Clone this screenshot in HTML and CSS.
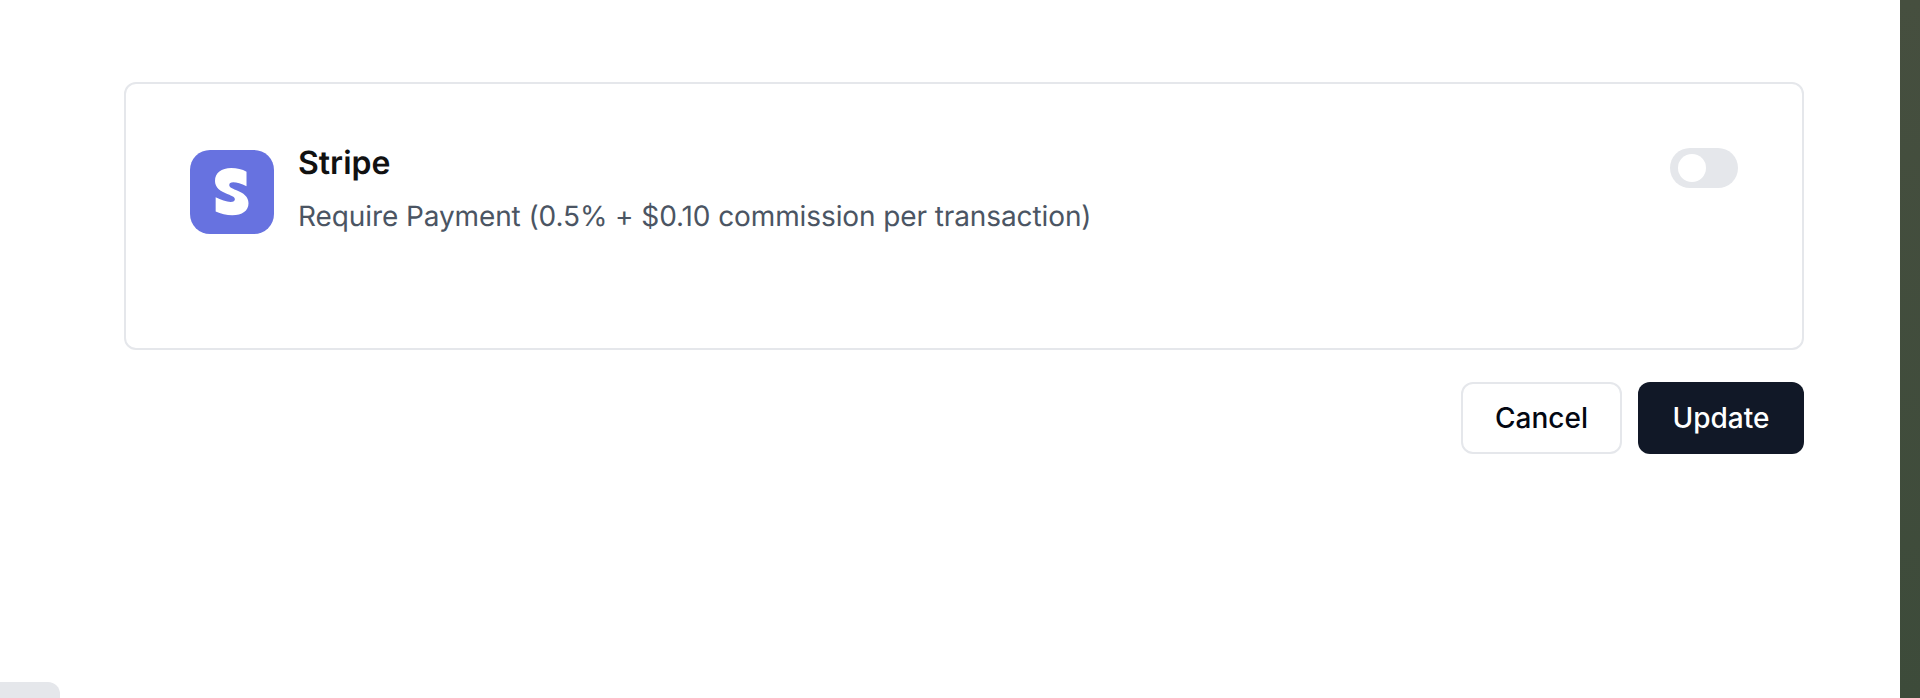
FILE: index.html
```html
<!DOCTYPE html>
<html lang="en">
<head>
<meta charset="utf-8">
<title>Stripe</title>
<link rel="stylesheet" href="styles.css">
</head>
<body>
<div class="shell">
  <main class="panel">
    <section class="card">
      <div class="logo">
        <svg class="logo-s" viewBox="345 325 101 142" aria-hidden="true"><path d="M440 336L440 380C425 372 410 368 400 368C392 368 388 371 388 376C388 383 396 386 408 391C432 400 446 412 446 431C446 454 427 467 397 467C380 467 362 463 347 456L347 413C362 421 380 427 392 427C401 427 405 424 405 419C405 412 396 409 384 404C360 395 345 383 345 364C345 340 364 325 394 325C411 325 427 329 440 336Z"/></svg>
      </div>
      <div class="info">
        <h2 class="name">Stripe</h2>
        <p class="desc">Require Payment (0.5% + $0.10 commission per transaction)</p>
      </div>
      <div class="toggle"><span class="knob"></span></div>
    </section>
    <div class="actions">
      <button class="btn btn-outline">Cancel</button>
      <button class="btn btn-dark">Update</button>
    </div>
    <div class="corner"></div>
  </main>
  <div class="band"></div>
</div>
</body>
</html>
```
FILE: styles.css
```css
* { box-sizing: border-box; }
html, body { margin: 0; height: 100%; overflow: hidden; }
body {
  font-family: Inter, "Noto Sans", sans-serif;
  font-optical-sizing: none;
  text-rendering: geometricPrecision;
  background: #fff;
}
.shell { display: flex; height: 698px; }
.panel {
  position: relative;
  flex: 0 0 1900px;
  padding: 82px 96px 0 124px;
  background: #fff;
}
.band { flex: 1; background: linear-gradient(180deg, #464f3f 0%, #3d4b3a 100%); }
.card {
  display: flex;
  align-items: flex-start;
  height: 268px;
  padding: 66px 64px 0;
  border: 2px solid #e5e7eb;
  border-radius: 12px;
}
.logo {
  flex: none;
  display: flex;
  align-items: center;
  justify-content: center;
  width: 84px;
  height: 84px;
  margin-right: 24px;
  border-radius: 20px;
  background: #6772e0;
}
.logo-s { width: 33.5px; height: 47.3px; fill: #fff; }
.info { flex: 1; margin-top: -7px; }
.name {
  margin: 0;
  font-size: 32px;
  line-height: 40px;
  font-weight: 600;
  color: #111111;
}
.desc {
  margin: 13px 0 0;
  font-size: 28px;
  line-height: 40px;
  font-weight: 400;
  letter-spacing: -0.1px;
  color: #4b5563;
}
.toggle {
  flex: none;
  width: 68px;
  height: 40px;
  margin-top: -2px;
  padding: 6px 8px;
  border-radius: 20px;
  background: #e5e7eb;
}
.knob { display: block; width: 28px; height: 28px; border-radius: 50%; background: #fff; }
.actions { display: flex; justify-content: flex-end; gap: 16px; margin-top: 32px; }
.btn {
  height: 72px;
  font-family: inherit;
  font-size: 28px;
  font-weight: 480;
  border-radius: 12px;
}
.btn-outline { width: 161px; background: #fff; border: 2px solid #e5e7eb; color: #030712; }
.btn-dark { width: 166px; background: #111827; border: 0; color: #fff; }
.corner {
  position: absolute;
  left: 0;
  bottom: 0;
  width: 60px;
  height: 16px;
  background: #e5e7eb;
  border-top-right-radius: 12px;
}
```
